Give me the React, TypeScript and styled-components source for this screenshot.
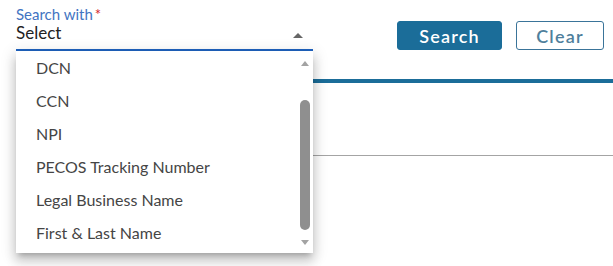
import React from "react";
import styled, { createGlobalStyle } from "styled-components";

const Global = createGlobalStyle`
  html, body { margin: 0; padding: 0; background: #fff; }
  body { font-family: Lato, "Noto Sans", sans-serif; }
  * { box-sizing: border-box; }
`;

const Page = styled.div`
  position: relative;
  width: 613px;
  height: 266px;
  overflow: hidden;
  padding-left: 16px;
`;

const TopRow = styled.div`
  display: flex;
  align-items: flex-start;
  height: 79px;
  padding-top: 6px;
`;

const Field = styled.div`
  position: relative;
  width: 297px;
  display: flex;
  flex-direction: column;
`;

const Label = styled.div`
  font-size: 15px;
  line-height: 16px;
  color: #4274c2;
`;

const Req = styled.span`
  color: #d3262c;
  margin-left: 2px;
`;

const SelectRow = styled.div`
  display: flex;
  justify-content: space-between;
  align-items: flex-start;
  height: 29px;
  padding: 2px 10px 0 0;
  border-bottom: 2px solid #1f63c0;
`;

const SelectValue = styled.span`
  font-size: 17px;
  line-height: 18px;
  color: #222;
`;

const Caret = styled.span<{ $w: number; $h: number; $c: string; $up?: boolean }>`
  display: block;
  width: 0;
  height: 0;
  border-left: ${(p) => p.$w / 2}px solid transparent;
  border-right: ${(p) => p.$w / 2}px solid transparent;
  ${(p) =>
    p.$up
      ? `border-bottom: ${p.$h}px solid ${p.$c};`
      : `border-top: ${p.$h}px solid ${p.$c};`}
`;

const SelectCaret = styled(Caret)`
  margin-top: 9px;
`;

const Button = styled.button<{ $primary?: boolean }>`
  margin-top: 15px;
  height: 29px;
  border-radius: 3px;
  font-family: Lato, "Noto Sans", sans-serif;
  font-size: 18px;
  font-weight: 600;
  letter-spacing: 1.2px;
  padding: 0;
  cursor: pointer;
  ${(p) =>
    p.$primary
      ? `width: 105px; margin-left: 84px; background: #1b6d99; color: #fff; border: 1px solid #1b6d99;`
      : `width: 88px; margin-left: 14px; background: #fff; color: #4f7f9c; border: 1px solid #3a7499;`}
`;

const TabArea = styled.div`
  height: 77px;
  border-top: 4px solid #1b6d99;
  border-bottom: 1px solid #a4a4a4;
`;

const Menu = styled.div`
  position: absolute;
  left: 16px;
  top: 51px;
  width: 297px;
  height: 202px;
  background: #fff;
  display: flex;
  z-index: 10;
  box-shadow: 0 5px 5px -3px rgba(0, 0, 0, 0.2), 0 8px 10px 1px rgba(0, 0, 0, 0.14),
    0 3px 14px 2px rgba(0, 0, 0, 0.12);
`;

const List = styled.ul`
  flex: 1;
  margin: 0;
  padding: 0 0 4px;
  list-style: none;
`;

const Item = styled.li`
  height: 33px;
  display: flex;
  align-items: center;
  padding-left: 20px;
  font-size: 16px;
  color: #454545;
`;

const ScrollBar = styled.div`
  width: 15px;
  display: flex;
  flex-direction: column;
  align-items: center;
  padding-right: 1px;
`;

const ScrollArrowUp = styled(Caret)`
  margin-top: 10px;
`;

const Thumb = styled.div`
  margin-top: 34px;
  width: 10px;
  height: 130px;
  border-radius: 5px;
  background: #8f8f8f;
`;

const ScrollArrowDown = styled(Caret)`
  margin-top: 10px;
`;

const options = [
  "DCN",
  "CCN",
  "NPI",
  "PECOS Tracking Number",
  "Legal Business Name",
  "First & Last Name",
];

export default function App() {
  return (
    <>
      <Global />
      <Page>
        <TopRow>
          <Field>
            <Label>
              Search with<Req>*</Req>
            </Label>
            <SelectRow>
              <SelectValue>Select</SelectValue>
              <SelectCaret $w={10} $h={5} $c="#666" $up />
            </SelectRow>
          </Field>
          <Button $primary>Search</Button>
          <Button>Clear</Button>
        </TopRow>
        <TabArea />
        <Menu>
          <List>
            {options.map((o) => (
              <Item key={o}>{o}</Item>
            ))}
          </List>
          <ScrollBar>
            <ScrollArrowUp $w={9} $h={5} $c="#a3a3a3" $up />
            <Thumb />
            <ScrollArrowDown $w={9} $h={5} $c="#a3a3a3" />
          </ScrollBar>
        </Menu>
      </Page>
    </>
  );
}
